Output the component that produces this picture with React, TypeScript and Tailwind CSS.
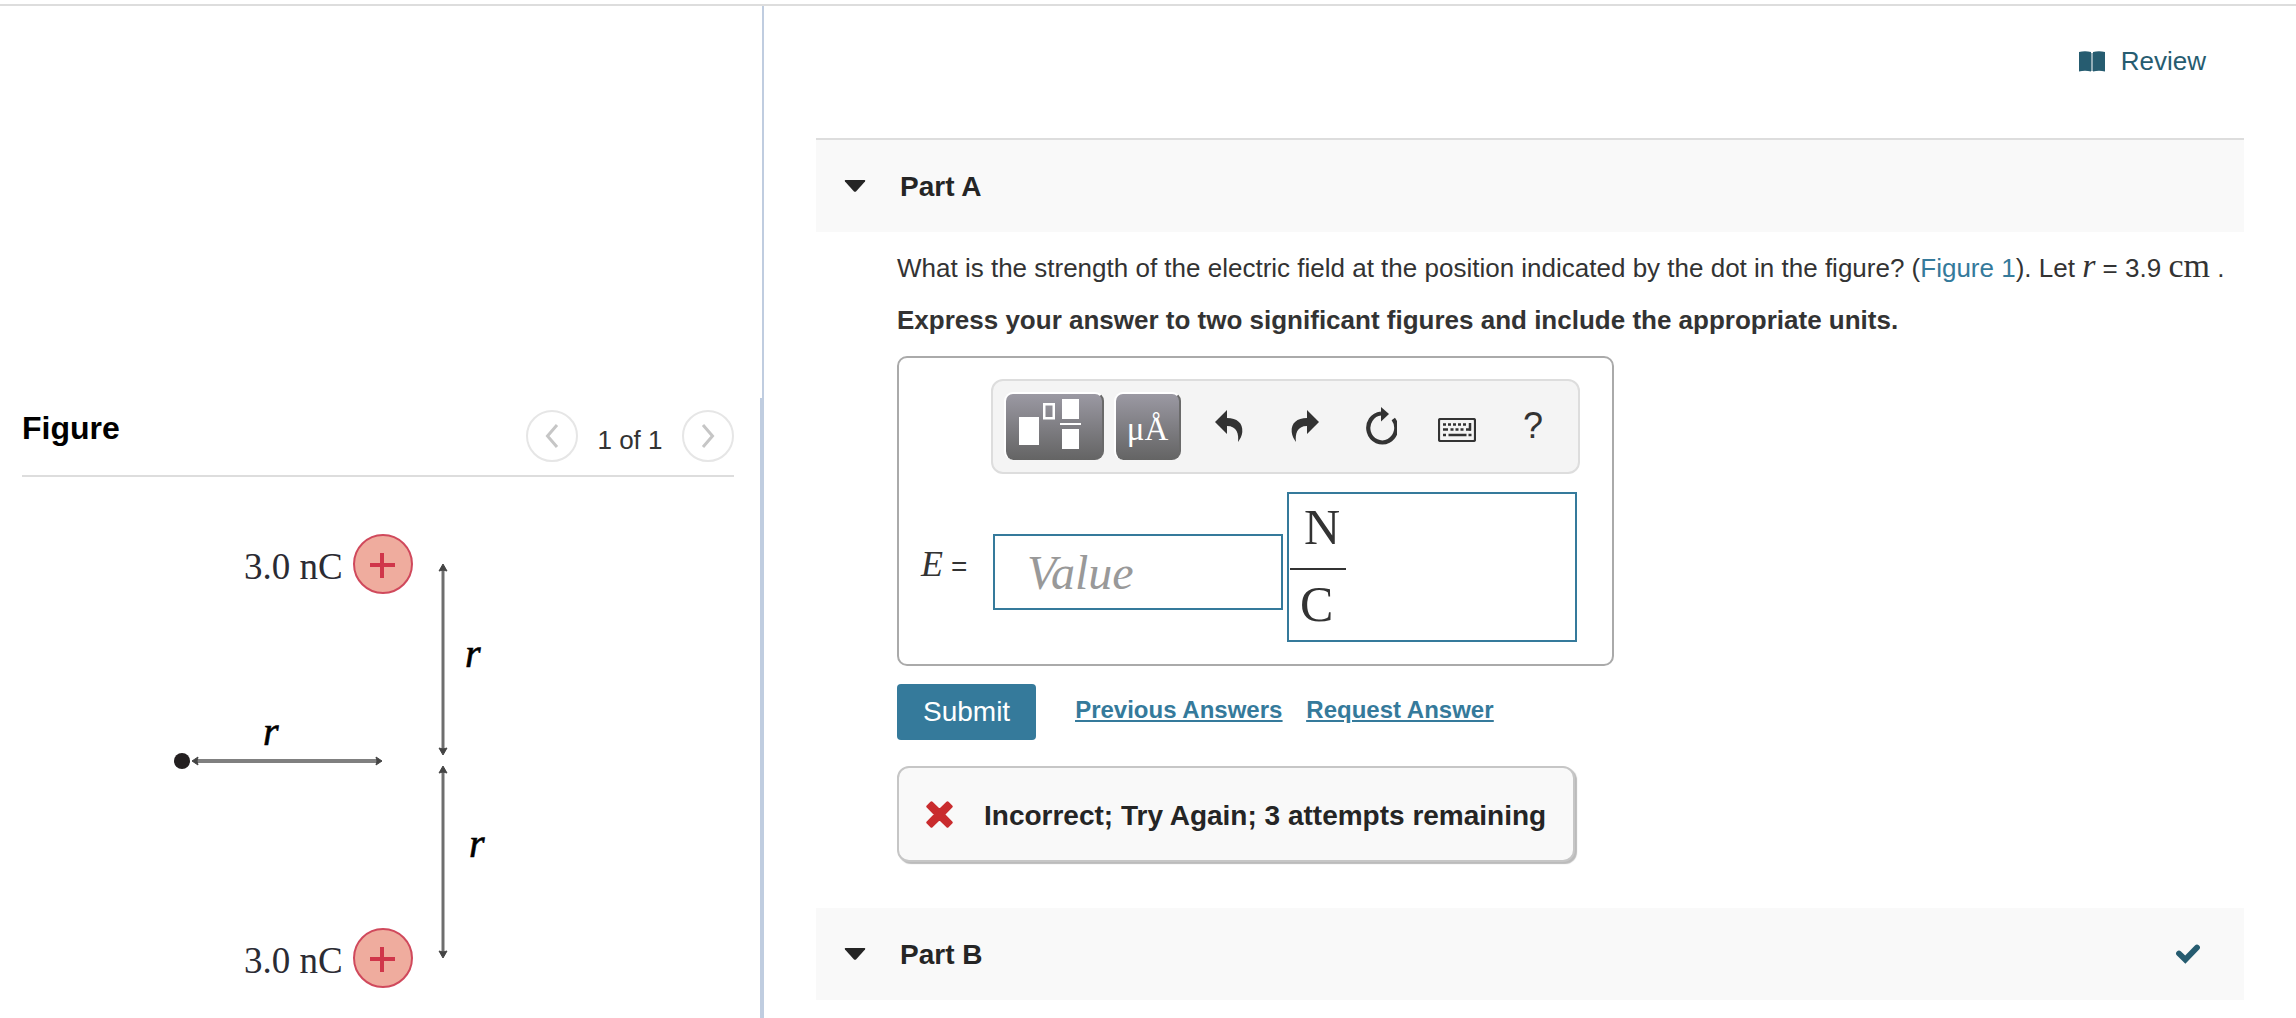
import type { ReactNode } from "react";

function Charge({ cy }: { cy: number }) {
  return (
    <g>
      <circle cx="361" cy={cy} r="29" fill="#efac9e" stroke="#d0495c" strokeWidth="2" />
      <path d={`M348 ${cy + 1}h25M360 ${cy - 11}v25`} stroke="#d0364a" strokeWidth="4" />
      <text x="222" y={cy + 15} fontSize="37" fill="#2b2b33">
        3.0 nC
      </text>
    </g>
  );
}

function VerticalArrow({ top, bottom }: { top: number; bottom: number }) {
  return (
    <g>
      <path d={`M421 ${top + 3}V${bottom - 3}`} stroke="#6e6e6e" strokeWidth="3" />
      <path
        d={`M421 ${top}l4 7q-4-2-8 0zM421 ${bottom}l4-7q-4 2-8 0z`}
        fill="#444"
        stroke="#444"
        strokeLinejoin="round"
      />
    </g>
  );
}

function Diagram() {
  return (
    <svg
      viewBox="0 0 712 512"
      className="block w-full font-['Liberation_Serif',serif]"
      role="img"
      aria-label="Two 3.0 nC charges and a dot, spaced by r"
    >
      <Charge cy={61} />
      <Charge cy={455} />
      <VerticalArrow top={61} bottom={252} />
      <VerticalArrow top={263} bottom={455} />
      <circle cx="160" cy="258" r="8" fill="#231f20" />
      <path d="M174 258H357" stroke="#808080" strokeWidth="4" />
      <path
        d="M170 258l6-4q-2 4 0 8zM360 258l-6-4q2 4 0 8z"
        fill="#444"
        stroke="#444"
        strokeLinejoin="round"
      />
      <g fontSize="40" fontStyle="italic" fill="#000" stroke="#000" strokeWidth="0.6">
        <text x="241" y="242">r</text>
        <text x="443" y="164">r</text>
        <text x="447" y="354">r</text>
      </g>
    </svg>
  );
}

function NavButton({ label, d }: { label: string; d: string }) {
  return (
    <button
      type="button"
      aria-label={label}
      className="flex size-13 items-center justify-center rounded-full border-2 border-[#e6e6e6]"
    >
      <svg viewBox="0 0 14 24" className="h-6 w-3.5" fill="none" stroke="#c6c6c6" strokeWidth="3">
        <path d={d} />
      </svg>
    </button>
  );
}

function PartHeader({ title, done = false }: { title: string; done?: boolean }) {
  return (
    <button
      type="button"
      aria-expanded="true"
      className="flex h-23 w-full items-center bg-[#f9f9f9] pr-11 pl-7 text-left text-[28px] font-bold text-[#252525]"
    >
      <svg viewBox="0 0 22 12" className="h-3 w-[22px]" fill="#252525">
        <path d="M1.5 0h19q1.2 0.4 0.5 1.6L12 11.4q-1 .9-2 0L1 1.6Q.3.4 1.5 0z" />
      </svg>
      <h2 className="ml-[34px] flex-1 pt-0.5">{title}</h2>
      {done && (
        <svg
          viewBox="0 0 24 20"
          className="h-5 w-6"
          fill="none"
          stroke="#265c70"
          strokeWidth="5.8"
          strokeLinecap="round"
          aria-label="Completed"
        >
          <path d="M3 9.5L9.3 15.6L21 3.5" />
        </svg>
      )}
    </button>
  );
}

function ToolButton({ label, children }: { label: string; children: ReactNode }) {
  return (
    <button
      type="button"
      aria-label={label}
      className="flex h-17 w-19 items-center justify-center text-[36px] text-[#333]"
    >
      {children}
    </button>
  );
}

const darkButton =
  "flex h-17 items-center justify-center rounded-[9px] border-t-2 border-r-2 border-l-2 border-t-white border-r-[#6a6a6a] border-l-white bg-linear-to-b from-[#9b99a3] to-[#646464] text-white";

function Toolbar() {
  return (
    <div
      role="toolbar"
      aria-label="Equation tools"
      className="flex items-center gap-2.5 rounded-xl border-2 border-[#ddd] bg-[#f4f4f4] pt-[11px] pr-[7px] pb-3 pl-[11px]"
    >
      <button type="button" aria-label="Templates" className={`${darkButton} w-[100px] pr-2 pb-1.5`}>
        <svg viewBox="0 0 62 50" className="h-[50px] w-[62px]">
          <path d="M0 18h20v28H0zM43 0h17v20H43zM43 30h17v20H43zM41 24h21v2H41z" fill="#fff" />
          <path d="M25.250 5.250h9.500v14h-9.500z" fill="none" stroke="#fff" strokeWidth="2.500" />
        </svg>
      </button>
      <button
        type="button"
        aria-label="Units"
        className={`${darkButton} w-[67px] pt-1.5 font-['Liberation_Serif',serif] text-[33px]`}
      >
        μÅ
      </button>
      <div className="flex">
        <ToolButton label="Undo">
          <svg viewBox="0 0 28 32" className="h-8 w-7" fill="#333">
            <path d="M12 0v8C22 8 28 13 27.300 22C27 26 25 29 23 32C24 24 22 16 12 16v8L0 12z" />
          </svg>
        </ToolButton>
        <ToolButton label="Redo">
          <svg viewBox="0 0 28 32" className="h-8 w-7" fill="#333">
            <path d="M16 0v8C6 8 0 13 .7 22C1 26 3 29 5 32C4 24 6 16 16 16v8L28 12z" />
          </svg>
        </ToolButton>
        <ToolButton label="Reset">
          <svg viewBox="0 0 32 38" className="h-[38px] w-8">
            <path
              d="M28.300 12A14 14.500 0 1 1 16 6.500"
              fill="none"
              stroke="#333"
              strokeWidth="4.200"
            />
            <path d="M16 0l8 7-8 7.500z" fill="#333" />
          </svg>
        </ToolButton>
        <ToolButton label="Keyboard">
          <svg viewBox="0 0 38 24" className="mt-2 h-6 w-[38px]">
            <rect x="1" y="1" width="36" height="22" rx="1.5" fill="none" stroke="#333" strokeWidth="2.200" />
            <path
              d="M5 6.500h3M10 6.500h3M15 6.500h3M20 6.500h3M25 6.500h3M5 11.500h5M12.500 11.500h3M17.500 11.500h3M22.500 11.500h3M28 11.500h5M5 17h3M10.500 17h18M30.500 17h3"
              stroke="#333"
              strokeWidth="2.500"
            />
            <path d="M32 5v7.500" stroke="#333" strokeWidth="2.500" />
          </svg>
        </ToolButton>
        <ToolButton label="Help">?</ToolButton>
      </div>
    </div>
  );
}

export default function App() {
  return (
    <div className="flex min-h-screen flex-col bg-white pt-1 font-['Liberation_Sans',Arial,sans-serif] text-[#333]">
      <div className="flex flex-1 border-t-2 border-[#ddd]">
        <aside className="flex w-[764px] shrink-0 flex-col">
          <div className="h-98 border-r-2 border-[#c0cde0]" />
          <section className="flex-1 border-r-4 border-[#c0cde0] pt-3 pr-[26px] pl-[22px]">
            <header className="flex items-start border-b-2 border-[#ddd] pb-[13px]">
              <h1 className="flex-1 text-[32px] leading-9 font-bold text-black">Figure</h1>
              <div className="flex items-center">
                <NavButton label="Previous figure" d="M12 1L2.500 12L12 23" />
                <span className="w-26 pt-2 text-center text-[26px] leading-8">1 of 1</span>
                <NavButton label="Next figure" d="M2 1L11.500 12L2 23" />
              </div>
            </header>
            <figure className="pt-[26px]">
              <Diagram />
            </figure>
          </section>
        </aside>

        <main className="min-w-0 flex-1 px-13 pb-4">
          <div className="flex h-33 items-start justify-end pt-[39px] pr-[38px]">
            <a href="#review" className="flex items-center gap-4 text-[26px] leading-8 text-[#265c70]">
              <svg viewBox="0 0 26 21" className="h-[21px] w-[26px]" fill="#265c70">
                <path d="M0 1Q6-.5 12 1V20.500Q6 19 0 20.500zM14 1Q20-.5 26 1V20.500Q20 19 14 20.500z" />
                <path d="M12 2h2v18h-2z" fillOpacity="0.500" />
              </svg>
              Review
            </a>
          </div>

          <section>
            <div className="border-t-2 border-[#ddd]">
              <PartHeader title="Part A" />
            </div>
            <div className="pt-4 pb-[46px] pl-[81px]">
              <p className="text-[26px] leading-10 whitespace-nowrap">
                What is the strength of the electric field at the position indicated by the dot in the figure? (
                <a href="#figure" className="text-[#357a9b]">
                  Figure 1
                </a>
                ). Let{" "}
                <i className="font-['Liberation_Serif',serif] text-[34px] leading-none">r</i> = 3.9{" "}
                <span className="font-['Liberation_Serif',serif] text-[34px] leading-none">cm</span> .
              </p>
              <p className="mt-3 text-[26px] leading-10 font-bold">
                Express your answer to two significant figures and include the appropriate units.
              </p>

              <form onSubmit={(e) => e.preventDefault()}>
                <div className="mt-4 w-fit rounded-[10px] border-2 border-[#aaa] pt-[21px] pr-8 pb-[22px] pl-5">
                  <div className="pl-18">
                    <Toolbar />
                  </div>
                  <div className="mt-[18px] flex">
                    <label htmlFor="value" className="flex w-[74px] items-baseline gap-2 self-center pb-1.5 pl-0.5 text-[28px]">
                      <i className="font-['Liberation_Serif',serif] text-[36px]">E</i>=
                    </label>
                    <input
                      id="value"
                      placeholder="Value"
                      className="mb-8 h-19 w-[290px] self-end border-2 border-[#357a9b] pl-8 font-['Liberation_Serif',serif] text-[48px] italic placeholder:text-[#999]"
                    />
                    <div
                      role="textbox"
                      aria-label="Units"
                      tabIndex={0}
                      className="ml-1 flex h-[150px] w-[290px] flex-col items-start border-2 border-[#357a9b] pl-px font-['Liberation_Serif',serif] text-[50px]"
                    >
                      <span className="h-19 w-14 border-b-2 border-[#333] pl-3.5 leading-[66px]">N</span>
                      <span className="pl-2.5 leading-[68px]">C</span>
                    </div>
                  </div>
                </div>

                <div className="mt-[18px] flex items-start">
                  <button
                    type="submit"
                    className="h-14 rounded-[4px] bg-[#357a9b] px-[26px] text-[28px] text-white"
                  >
                    Submit
                  </button>
                  <div className="ml-[39px] flex gap-6 pt-2.5 text-[24px] leading-8 font-bold text-[#357a9b] underline">
                    <a href="#previous">Previous Answers</a>
                    <a href="#request">Request Answer</a>
                  </div>
                </div>
              </form>

              <div
                role="status"
                className="mt-[26px] flex h-24 w-fit items-center rounded-xl border-2 border-[#c6c6c6] bg-[#f9f9f9] px-[27px] text-[28px] font-bold text-[#252525] shadow-[2px_2px_1px_#bbb]"
              >
                <svg
                  viewBox="0 0 27 27"
                  className="mr-[31px] size-[27px]"
                  stroke="#c92c2e"
                  fill="#c92c2e"
                  strokeWidth="3"
                  strokeLinejoin="round"
                >
                  <path d="M5.500 1.800L13.500 9.600L21.500 1.800L25.200 5.500L17.400 13.500L25.200 21.500L21.500 25.200L13.500 17.400L5.500 25.200L1.800 21.500L9.600 13.500L1.800 5.500z" />
                </svg>
                <span className="pt-1">Incorrect; Try Again; 3 attempts remaining</span>
              </div>
            </div>
          </section>

          <section>
            <PartHeader title="Part B" done />
          </section>
        </main>
      </div>
    </div>
  );
}
